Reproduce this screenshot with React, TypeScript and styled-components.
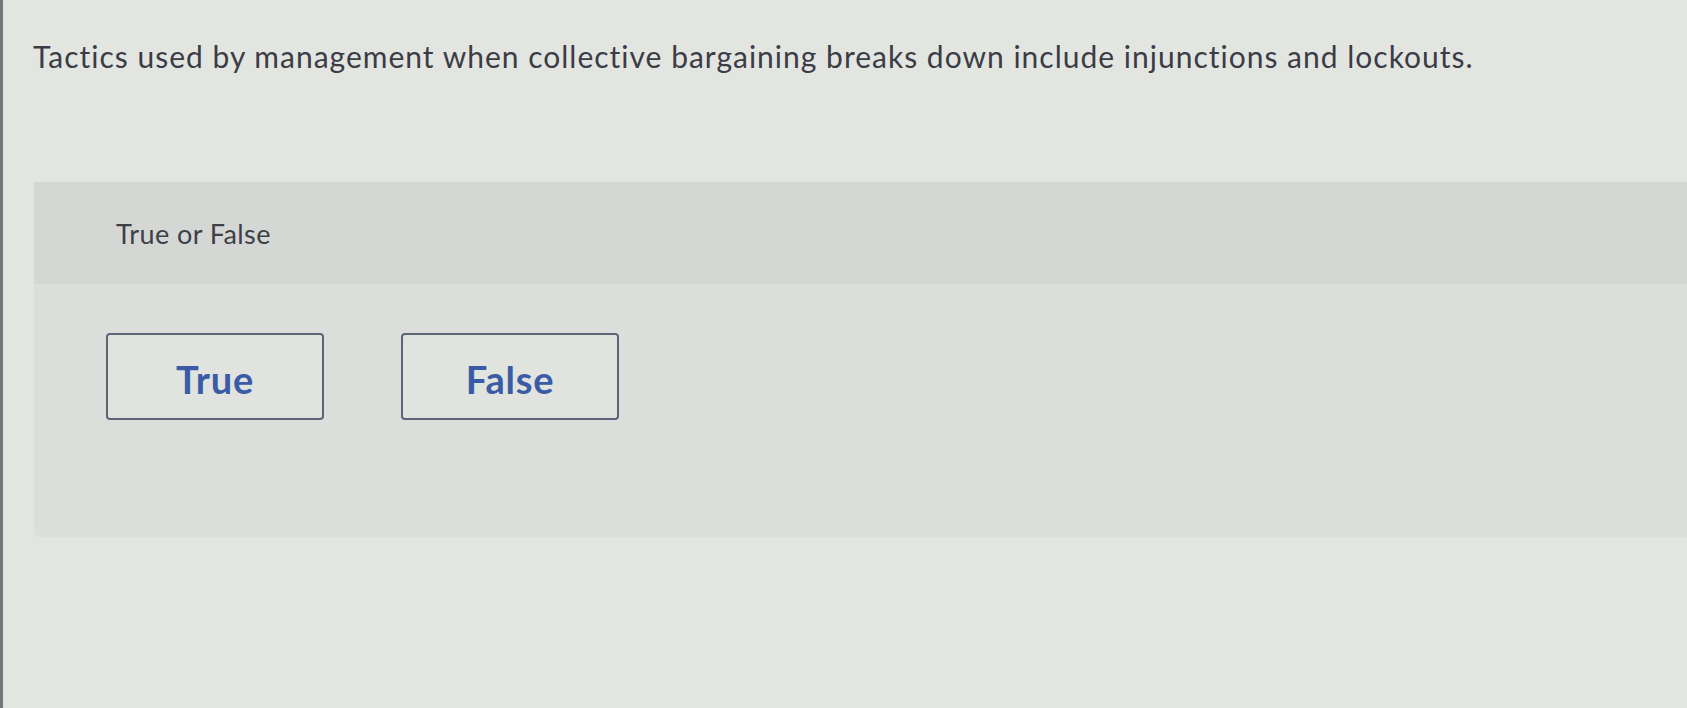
import React from 'react'
import styled, { createGlobalStyle } from 'styled-components'

const GlobalStyle = createGlobalStyle`
    html, body {
        margin: 0;
        padding: 0;
        background: #e3e5e1;
    }
    body {
        font-family: Lato, "Liberation Sans", sans-serif;
    }
`

const Page = styled.div`
    width: 100%;
    min-height: 708px;
    box-sizing: border-box;
    border-left: 3px solid #75777a;
    background: #e3e5e1;
    padding: 38px 0 0 30px;
    overflow: hidden;
`

const Question = styled.p`
    margin: 0;
    font-size: 30px;
    line-height: 36px;
    letter-spacing: 1px;
    color: #3b3c45;
`

const Card = styled.div`
    margin: 108px 0 0 1px;
    background: #dcdedb;
    border-radius: 0 0 0 6px;
    height: 355px;
    display: flex;
    flex-direction: column;
`

const CardHeader = styled.div`
    height: 102px;
    background: #d5d7d4;
    display: flex;
    align-items: center;
    padding-left: 82px;
    font-size: 27px;
    letter-spacing: 0.4px;
    color: #3e3f48;
`

const Options = styled.div`
    display: flex;
    gap: 77px;
    padding: 49px 0 0 72px;
`

const Option = styled.button`
    width: 218px;
    height: 87px;
    box-sizing: border-box;
    border: 2px solid #5d6478;
    border-radius: 4px;
    background: #e1e3df;
    font-family: Lato, "Liberation Sans", sans-serif;
    font-weight: 700;
    font-size: 38px;
    letter-spacing: 0.8px;
    color: #3a5ca6;
    cursor: pointer;
    padding: 4px 0 0;
`

const answers = ['True', 'False']

const App: React.FC = () => {
    return (
        <>
            <GlobalStyle />
            <Page>
                <Question>
                    Tactics used by management when collective bargaining breaks down include injunctions and lockouts.
                </Question>
                <Card>
                    <CardHeader>True or False</CardHeader>
                    <Options>
                        {answers.map((a) => (
                            <Option key={a}>{a}</Option>
                        ))}
                    </Options>
                </Card>
            </Page>
        </>
    )
}

export default App
